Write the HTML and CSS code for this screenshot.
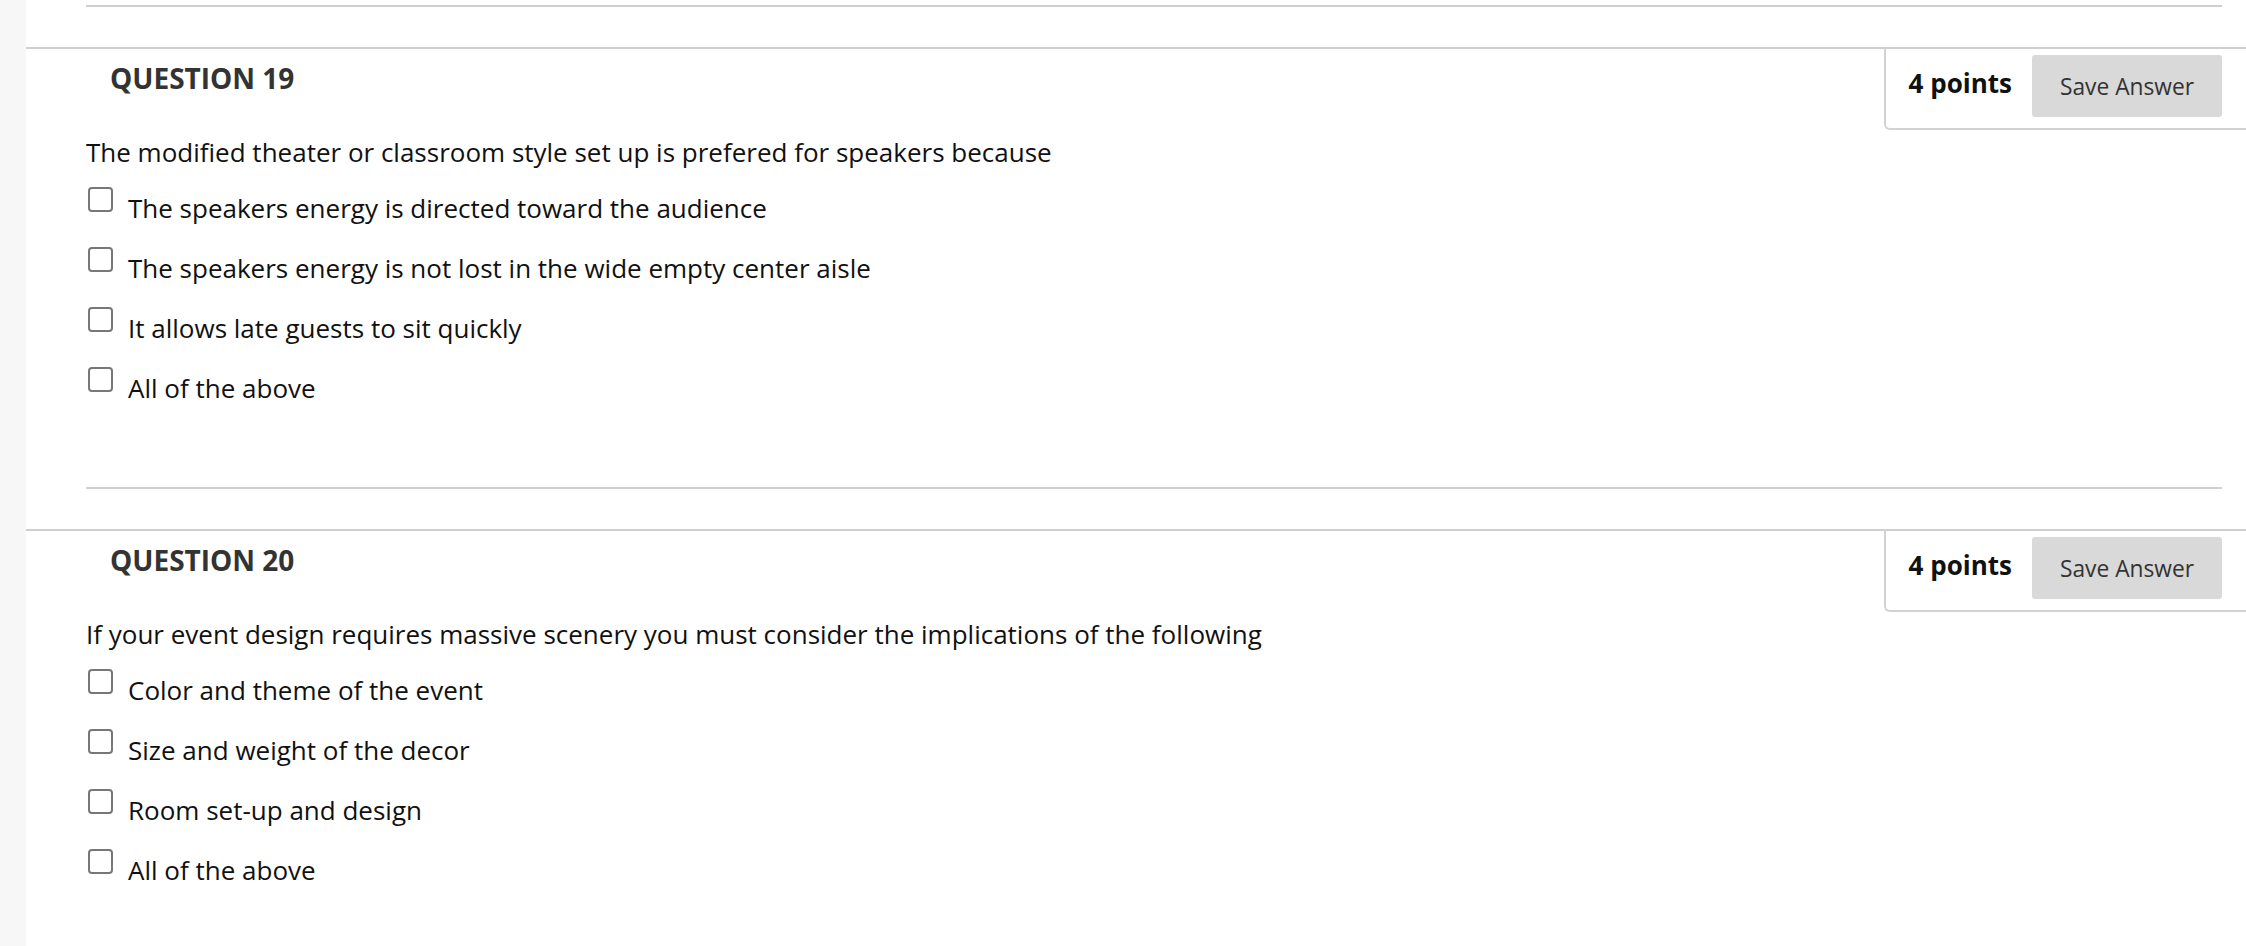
FILE: index.html
```html
<!DOCTYPE html>
<html lang="en">
<head>
<meta charset="utf-8">
<title>Questions</title>
<link rel="stylesheet" href="styles.css">
</head>
<body>
<div class="page">
  <div class="side-strip"></div>
  <main class="content">
    <div class="prev-end"></div>

    <section class="question">
      <div class="q-header">
        <h3 class="q-title">QUESTION 19</h3>
        <div class="points-box">
          <span class="points">4 points</span>
          <button class="save-btn" type="button">Save Answer</button>
        </div>
      </div>
      <div class="q-body">
        <p class="q-text">The modified theater or classroom style set up is prefered for speakers because</p>
        <ul class="options">
          <li class="option"><input class="cb" type="checkbox"><span class="opt-label">The speakers energy is directed toward the audience</span></li>
          <li class="option"><input class="cb" type="checkbox"><span class="opt-label">The speakers energy is not lost in the wide empty center aisle</span></li>
          <li class="option"><input class="cb" type="checkbox"><span class="opt-label">It allows late guests to sit quickly</span></li>
          <li class="option"><input class="cb" type="checkbox"><span class="opt-label">All of the above</span></li>
        </ul>
      </div>
    </section>

    <section class="question">
      <div class="q-header">
        <h3 class="q-title">QUESTION 20</h3>
        <div class="points-box">
          <span class="points">4 points</span>
          <button class="save-btn" type="button">Save Answer</button>
        </div>
      </div>
      <div class="q-body">
        <p class="q-text">If your event design requires massive scenery you must consider the implications of the following</p>
        <ul class="options">
          <li class="option"><input class="cb" type="checkbox"><span class="opt-label">Color and theme of the event</span></li>
          <li class="option"><input class="cb" type="checkbox"><span class="opt-label">Size and weight of the decor</span></li>
          <li class="option"><input class="cb" type="checkbox"><span class="opt-label">Room set-up and design</span></li>
          <li class="option"><input class="cb" type="checkbox"><span class="opt-label">All of the above</span></li>
        </ul>
      </div>
    </section>
  </main>
</div>
</body>
</html>
```
FILE: styles.css
```css
html, body {
  margin: 0;
  padding: 0;
  background: #ffffff;
}

body {
  font-family: "Open Sans", "Noto Sans", sans-serif;
  color: #111111;
  overflow: hidden;
}

.page {
  display: flex;
  min-height: 100vh;
}

.side-strip {
  width: 26px;
  flex: 0 0 26px;
  background: #f7f7f7;
}

.content {
  flex: 1;
  min-width: 0;
}

.prev-end {
  height: 5px;
  margin: 0 24px 40px 60px;
  border-bottom: 2px solid #cfcfcf;
}

.question {
  border-top: 2px solid #cfcfcf;
  margin-bottom: 40px;
}

.q-header {
  display: flex;
  align-items: flex-start;
}

.q-title {
  margin: 10px 0 0 0;
  padding-left: 84px;
  font-size: 28px;
  font-weight: 700;
  color: #333333;
  line-height: normal;
}

.points-box {
  margin-left: auto;
  display: flex;
  align-items: flex-start;
  gap: 20px;
  padding: 6px 24px 11px 23px;
  border-left: 2px solid #d2d2d2;
  border-bottom: 2px solid #d2d2d2;
  border-bottom-left-radius: 6px;
}

.points {
  margin-top: 10px;
  font-size: 26px;
  font-weight: 700;
  line-height: 36px;
  color: #111111;
}

.save-btn {
  width: 190px;
  height: 62px;
  border: none;
  border-radius: 3px;
  background: #d9d9d9;
  color: #333333;
  font-family: "Open Sans", "Noto Sans", sans-serif;
  font-size: 22.75px;
  padding: 0;
}

.q-body {
  margin: 4px 24px 0 60px;
  padding-bottom: 81px;
  border-bottom: 2px solid #cfcfcf;
}

.q-text {
  margin: 0 0 17px 0;
  font-size: 26px;
  line-height: 36px;
  color: #111111;
}

.options {
  list-style: none;
  margin: 0;
  padding: 0;
}

.option {
  display: flex;
  align-items: flex-start;
  margin-bottom: 21px;
}

.option:last-child {
  margin-bottom: 0;
}

.cb {
  appearance: none;
  -webkit-appearance: none;
  box-sizing: border-box;
  width: 25px;
  height: 25px;
  margin: 0 0 0 2px;
  flex: 0 0 25px;
  border: 2px solid #777777;
  border-radius: 4px;
  background: #ffffff;
}

.opt-label {
  margin: 3px 0 0 15px;
  font-size: 26px;
  line-height: 36px;
  color: #111111;
}
```
